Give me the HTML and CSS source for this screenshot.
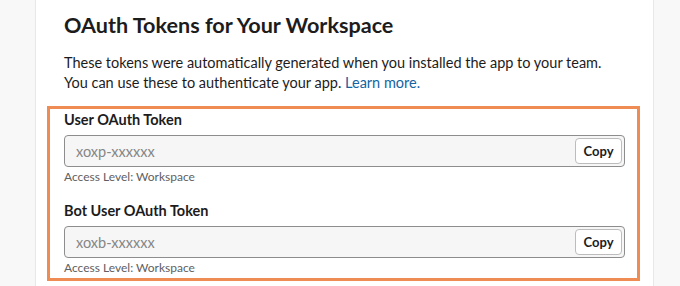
FILE: index.html
```html
<!DOCTYPE html>
<html lang="en">
<head>
<meta charset="UTF-8" />
<meta name="viewport" content="width=device-width, initial-scale=1" />
<title>OAuth Tokens</title>
<link rel="stylesheet" href="styles.css">
</head>
<body>
<main class="panel">
  <h1>OAuth Tokens for Your Workspace</h1>
  <p class="intro">
    These tokens were automatically generated when you installed the app to your team.<br>
    You can use these to authenticate your app. <a href="#">Learn more.</a>
  </p>
  <section class="token-box">
    <div class="token">
      <label for="user-token">User OAuth Token</label>
      <div class="token-field">
        <input type="text" id="user-token" placeholder="xoxp-xxxxxx" readonly />
        <button type="button">Copy</button>
      </div>
      <div class="access">Access Level: Workspace</div>
    </div>
    <div class="token">
      <label for="bot-token">Bot User OAuth Token</label>
      <div class="token-field">
        <input type="text" id="bot-token" placeholder="xoxb-xxxxxx" readonly />
        <button type="button">Copy</button>
      </div>
      <div class="access">Access Level: Workspace</div>
    </div>
  </section>
</main>
</body>
</html>
```

FILE: styles.css
```css
body {
  font-family: Lato, 'Noto Sans', sans-serif;
  background: #f8f8f8;
  margin: 0;
  color: #1d1c1d;
  height: 286px;
  overflow: hidden;
}
.panel {
  margin-left: 35px;
  width: 561px;
  min-height: 286px;
  padding: 0 28px;
  background: white;
  border-left: 1px solid #e8e8e8;
  border-right: 1px solid #e8e8e8;
}
h1 {
  margin: 0;
  padding-top: 11px;
  font-size: 21.6px;
  line-height: 28px;
  font-weight: 700;
}
.intro {
  margin: 13.5px 0 0;
  font-size: 14.5px;
  line-height: 20px;
}
.intro a {
  color: #1264a3;
  text-decoration: none;
}
.token-box {
  margin: 13.5px -15px 0 -17px;
  padding: 1px 12px 2px 14px;
  border: 3px solid #ee8c53;
}
.token label {
  display: block;
  font-size: 14.5px;
  font-weight: 700;
  line-height: 20px;
  margin-bottom: 5px;
}
.token + .token {
  margin-top: 16px;
}
.token-field {
  display: flex;
  align-items: center;
  height: 32px;
  padding: 0 2px 0 11px;
  background: #f6f6f6;
  border: 1px solid #8d8d8d;
  border-radius: 4px;
  box-sizing: border-box;
}
.token-field input {
  flex: 1;
  min-width: 0;
  border: none;
  background: transparent;
  font: inherit;
  font-size: 14.5px;
  padding: 0;
  outline: none;
}
.token-field input::placeholder {
  color: #868686;
}
.token-field button {
  font-family: inherit;
  font-size: 13px;
  font-weight: 700;
  color: #1d1c1d;
  background: white;
  border: 1px solid #bcbcbc;
  border-radius: 4px;
  height: 26px;
  width: 47px;
  padding: 0;
}
.access {
  margin-top: 2px;
  font-size: 12px;
  line-height: 16px;
  color: #616061;
}
```
